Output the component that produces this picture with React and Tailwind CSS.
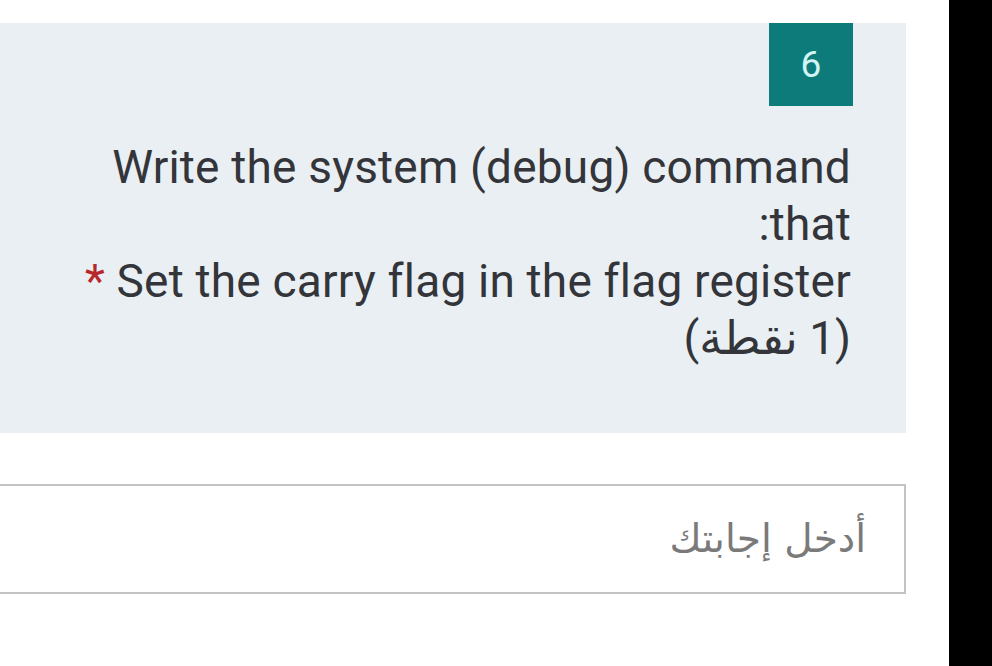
export default function App() {
  return (
    <div className="flex w-[992px] h-[666px] bg-white overflow-hidden" style={{ fontFamily: 'Roboto, "DejaVu Sans", sans-serif' }}>
      <div className="flex-1 flex flex-col pr-[43px] pt-[23px]">
        <div className="bg-[#e9eff2] h-[410px] pr-[55px] flex flex-col items-end">
          <div className="w-[84px] h-[83px] mr-[-2px] bg-[#0e7b7b] flex items-center justify-center text-[#d2f4f4] text-[37px]">6</div>
          <div dir="rtl" className="mt-[33px] text-[46px] leading-[57px] text-[#33353a] text-right tracking-[0.2px]">
            <div>
              Write the system (debug) command
              <br />
              that:
            </div>
            <div>
              Set the carry flag in the flag register <span className="text-[#b8282a]">*</span>
            </div>
            <div>(1 نقطة)</div>
          </div>
        </div>
        <div className="mt-[51px] ml-[-2px] h-[110px] border-2 border-[#c3c3c3] bg-white flex items-center justify-end pr-[38px]">
          <span dir="rtl" className="text-[39px] text-[#7a7a7a]" style={{ fontFamily: '"DejaVu Sans", sans-serif' }}>أدخل إجابتك</span>
        </div>
      </div>
      <div className="w-[43px] h-full bg-black" />
    </div>
  );
}
